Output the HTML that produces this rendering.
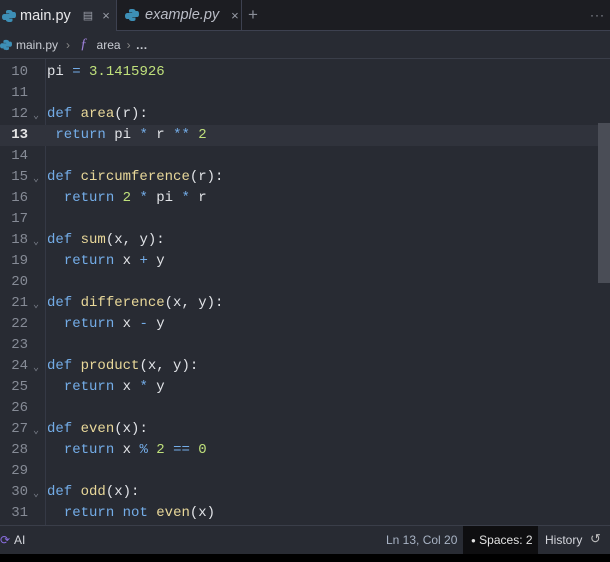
<!DOCTYPE html>
<html><head><style>
*{margin:0;padding:0;box-sizing:border-box}
body{width:610px;height:562px;background:#000;overflow:hidden;font-family:"Liberation Sans",sans-serif;position:relative}
.tabs{position:absolute;top:0;left:0;width:610px;height:31px;background:#1c1d22;border-bottom:1px solid #3d4150}
.tab{position:absolute;top:0;height:30px;display:flex;align-items:center;font-size:14.5px}
.t1{left:0;width:116px;background:#282b33;color:#e8e8ea;height:31px}
.t2{left:116px;width:126px;border-left:1px solid #3d4150;border-right:1px solid #3d4150;color:#b9bcc6;font-style:italic}
.crumb{position:absolute;top:31px;left:0;width:610px;height:28px;background:#282b33;border-bottom:1px solid #3a3e49;font-size:12px;color:#c9ccd3;display:flex;align-items:center}
.ed{position:absolute;top:59px;left:0;width:610px;height:466px;background:#282b33;overflow:hidden}
.row{position:absolute;left:0;width:598px;height:21px;font-family:"Liberation Mono",monospace;font-size:14px;line-height:21px;white-space:pre}
.row.cur{background:#30333c}
.ln{position:absolute;left:0;width:28px;text-align:right;color:#868b96}
.cur .ln{color:#e6e6e6;font-weight:bold}
.fold{position:absolute;left:33px;color:#7c818c;font-size:10px;top:2px}
.code{position:absolute;left:47px;color:#e2e4e8}
.k{color:#74ade8}.f{color:#e9d89a}.n{color:#bfe07b}.o{color:#74ade8}.p{color:#d7dae0}
.guide{position:absolute;left:45px;top:0;width:1px;height:466px;background:#353945}
.sb{position:absolute;right:0;top:64px;width:12px;height:160px;background:#4a4d56}
.status{position:absolute;top:525px;left:0;width:610px;height:29px;background:#282b33;border-top:1px solid #3a3e49;font-size:12px;color:#d4d6dc}
</style></head><body>
<div class="tabs">
 <div class="tab t1"><svg width="14" height="14" viewBox="0 0 14 14" style="margin-left:2px"><path d="M7 1C4 1 4 2 4 3v1.5h3.2V5H2.5C1 5 0 6 0 8s1 3 2.5 3H4V9.5C4 8.5 5 7.5 6 7.5h3C10 7.5 10.5 7 10.5 6V3C10.5 2 9.5 1 7 1z" fill="#3d8fb6"/><path d="M7.5 13c3 0 3-1 3-2V9.5H7.3V9H12c1.5 0 2-1 2-3s-.5-3-2-3h-1.5v1.5c0 1-1 2-2 2h-3c-1 0-1.5.5-1.5 1.5v3c0 1 1 2 3.5 2z" fill="#3d8fb6"/></svg><span style="margin-left:4px">main.py</span><span style="margin-left:12px;color:#9a9ea8;font-size:11px">&#9636;</span><span style="margin-left:9px;color:#9a9ea8;font-size:13px">×</span></div>
 <div class="tab t2"><svg width="14" height="14" viewBox="0 0 14 14" style="margin-left:8px"><path d="M7 1C4 1 4 2 4 3v1.5h3.2V5H2.5C1 5 0 6 0 8s1 3 2.5 3H4V9.5C4 8.5 5 7.5 6 7.5h3C10 7.5 10.5 7 10.5 6V3C10.5 2 9.5 1 7 1z" fill="#3d8fb6"/><path d="M7.5 13c3 0 3-1 3-2V9.5H7.3V9H12c1.5 0 2-1 2-3s-.5-3-2-3h-1.5v1.5c0 1-1 2-2 2h-3c-1 0-1.5.5-1.5 1.5v3c0 1 1 2 3.5 2z" fill="#3d8fb6"/></svg><span style="margin-left:6px">example.py</span><span style="margin-left:12px;color:#9a9ea8;font-style:normal;font-size:13px">×</span></div>
 <div class="tab" style="left:248px;color:#8a8e98;font-size:17px">+</div>
 <div class="tab" style="left:590px;color:#9a9ea8;font-size:12px;letter-spacing:1px">···</div>
</div>
<div class="crumb"><svg width="12" height="12" viewBox="0 0 14 14"><path d="M7 1C4 1 4 2 4 3v1.5h3.2V5H2.5C1 5 0 6 0 8s1 3 2.5 3H4V9.5C4 8.5 5 7.5 6 7.5h3C10 7.5 10.5 7 10.5 6V3C10.5 2 9.5 1 7 1z" fill="#3d8fb6"/><path d="M7.5 13c3 0 3-1 3-2V9.5H7.3V9H12c1.5 0 2-1 2-3s-.5-3-2-3h-1.5v1.5c0 1-1 2-2 2h-3c-1 0-1.5.5-1.5 1.5v3c0 1 1 2 3.5 2z" fill="#3d8fb6"/></svg><span style="margin-left:4px">main.py</span><span style="margin-left:8px;color:#888">›</span><span style="margin-left:10px;color:#9b7fd6;font-style:italic;font-family:'Liberation Serif',serif;font-size:15px">ƒ</span><span style="margin-left:9px">area</span><span style="margin-left:6px;color:#888">›</span><span style="margin-left:5px;font-weight:bold">…</span></div>
<div class="ed">
 <div class="guide"></div>
 <div class="row" style="top:3px"><span class="ln">10</span><span class="code">pi <span class="o">=</span> <span class="n">3.1415926</span></span></div>
 <div class="row" style="top:24px"><span class="ln">11</span></div>
 <div class="row" style="top:45px"><span class="ln">12</span><span class="fold">⌄</span><span class="code"><span class="k">def</span> <span class="f">area</span>(r):</span></div>
 <div class="row cur" style="top:66px"><span class="ln">13</span><span class="code"> <span class="k">return</span> pi <span class="o">*</span> r <span class="o">**</span> <span class="n">2</span></span></div>
 <div class="row" style="top:87px"><span class="ln">14</span></div>
 <div class="row" style="top:108px"><span class="ln">15</span><span class="fold">⌄</span><span class="code"><span class="k">def</span> <span class="f">circumference</span>(r):</span></div>
 <div class="row" style="top:129px"><span class="ln">16</span><span class="code">  <span class="k">return</span> <span class="n">2</span> <span class="o">*</span> pi <span class="o">*</span> r</span></div>
 <div class="row" style="top:150px"><span class="ln">17</span></div>
 <div class="row" style="top:171px"><span class="ln">18</span><span class="fold">⌄</span><span class="code"><span class="k">def</span> <span class="f">sum</span>(x, y):</span></div>
 <div class="row" style="top:192px"><span class="ln">19</span><span class="code">  <span class="k">return</span> x <span class="o">+</span> y</span></div>
 <div class="row" style="top:213px"><span class="ln">20</span></div>
 <div class="row" style="top:234px"><span class="ln">21</span><span class="fold">⌄</span><span class="code"><span class="k">def</span> <span class="f">difference</span>(x, y):</span></div>
 <div class="row" style="top:255px"><span class="ln">22</span><span class="code">  <span class="k">return</span> x <span class="o">-</span> y</span></div>
 <div class="row" style="top:276px"><span class="ln">23</span></div>
 <div class="row" style="top:297px"><span class="ln">24</span><span class="fold">⌄</span><span class="code"><span class="k">def</span> <span class="f">product</span>(x, y):</span></div>
 <div class="row" style="top:318px"><span class="ln">25</span><span class="code">  <span class="k">return</span> x <span class="o">*</span> y</span></div>
 <div class="row" style="top:339px"><span class="ln">26</span></div>
 <div class="row" style="top:360px"><span class="ln">27</span><span class="fold">⌄</span><span class="code"><span class="k">def</span> <span class="f">even</span>(x):</span></div>
 <div class="row" style="top:381px"><span class="ln">28</span><span class="code">  <span class="k">return</span> x <span class="o">%</span> <span class="n">2</span> <span class="o">==</span> <span class="n">0</span></span></div>
 <div class="row" style="top:402px"><span class="ln">29</span></div>
 <div class="row" style="top:423px"><span class="ln">30</span><span class="fold">⌄</span><span class="code"><span class="k">def</span> <span class="f">odd</span>(x):</span></div>
 <div class="row" style="top:444px"><span class="ln">31</span><span class="code">  <span class="k">return</span> <span class="k">not</span> <span class="f">even</span>(x)</span></div>
 <div class="sb"></div>
</div>
<div class="status">
 <span style="position:absolute;left:0;top:7px;color:#8a6ee0;font-size:12px">⟳</span>
 <span style="position:absolute;left:14px;top:7px">AI</span>
 <span style="position:absolute;left:386px;top:7px;color:#a8b3c4">Ln 13, Col 20</span>
 <div style="position:absolute;left:463px;top:0;width:75px;height:28px;background:#0e0e10"><span style="position:absolute;left:8px;top:7px;color:#e2e2e2"><span style="font-size:8px;vertical-align:1px">●</span> Spaces: 2</span></div>
 <span style="position:absolute;left:545px;top:7px">History</span>
 <span style="position:absolute;left:590px;top:5px;color:#bbb;font-size:13px">↺</span>
</div>
</body></html>
